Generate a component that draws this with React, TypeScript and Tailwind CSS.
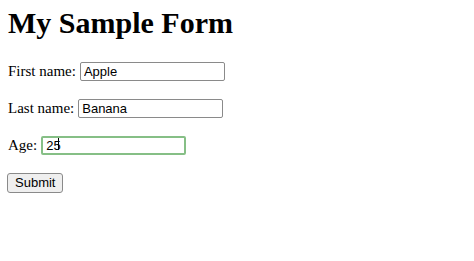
import React from 'react';

const inputBase =
  'w-[145px] h-[19px] rounded-[2px] bg-white px-[3px] text-[13px] text-black outline-none font-["Liberation_Sans",Arial,sans-serif]';

const Field = ({ label, value, focused }: { label: string; value: string; focused?: boolean }) => (
  <div className="flex items-baseline gap-[4px] h-[19px]">
    <label className="text-[15px] leading-[19px] text-black">{label}</label>
    <div className="relative">
      <input
        readOnly
        value={value}
        className={`${inputBase} ${focused ? 'border-2 border-[#86bf86] px-[2px]' : 'border border-[#8a8a8a]'}`}
      />
      {focused && <span className="absolute left-[17px] top-[5px] w-[1px] h-[12px] bg-black" />}
    </div>
  </div>
);

export default function App() {
  return (
    <div className="min-h-[261px] bg-white px-[8px] pt-[8px] font-['Liberation_Serif','Times_New_Roman',serif] text-black">
      <h1 className="text-[30px] leading-[30px] font-bold">My Sample Form</h1>
      <form className="mt-[21px] flex flex-col gap-[18px]" onSubmit={(e) => e.preventDefault()}>
        <Field label="First name:" value="Apple" />
        <Field label="Last name:" value="Banana" />
        <Field label="Age:" value="25" focused />
        <div>
          <button
            type="submit"
            className="h-[20px] px-[7px] -ml-[1px] rounded-[3px] border border-[#8a8a8a] bg-[#efefef] text-[13px] leading-[18px] text-black font-['Liberation_Sans',Arial,sans-serif]"
          >
            Submit
          </button>
        </div>
      </form>
    </div>
  );
}
